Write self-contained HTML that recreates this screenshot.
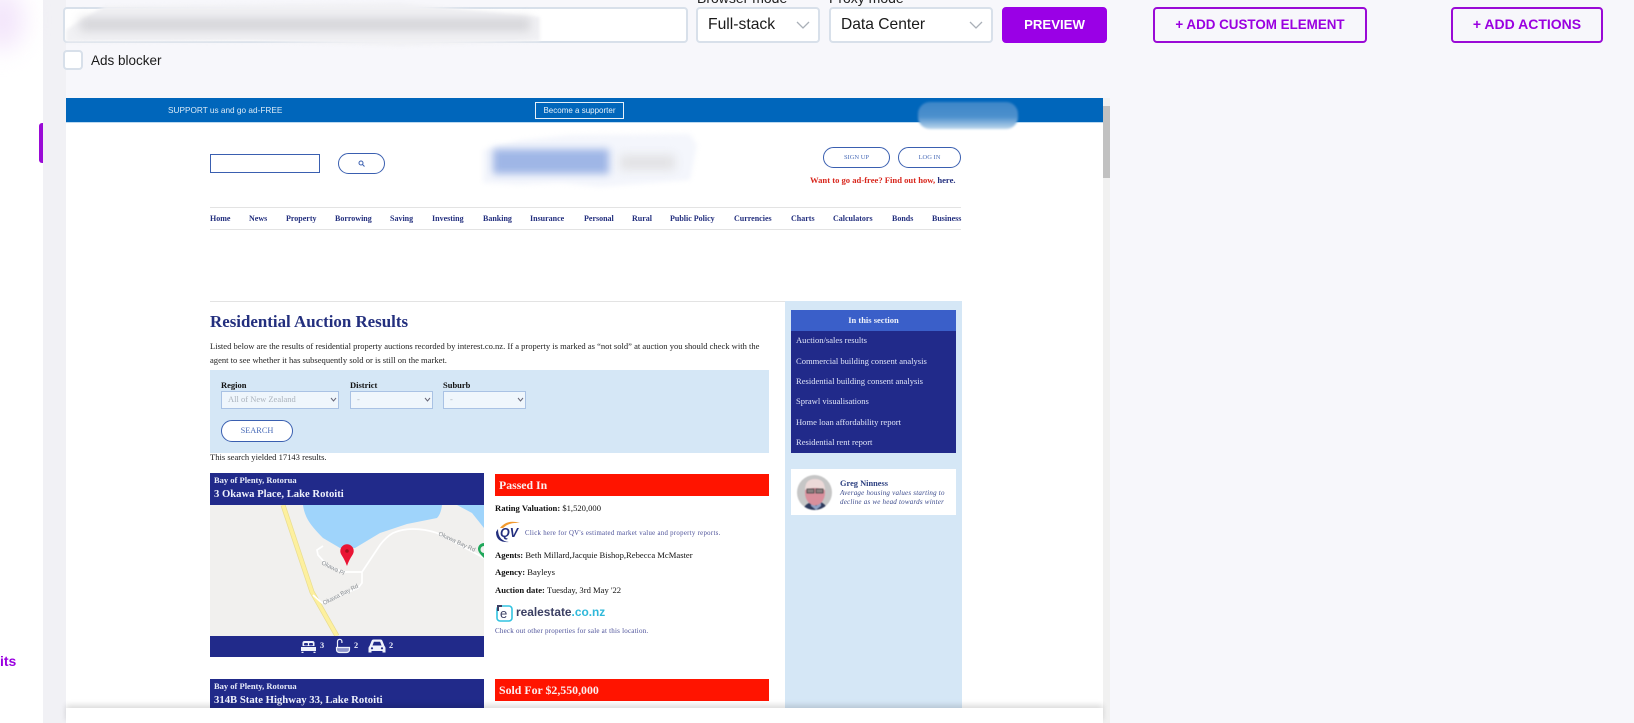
<!DOCTYPE html>
<html><head><meta charset="utf-8"><style>
html,body{margin:0;padding:0;width:1634px;height:723px;overflow:hidden;background:#f7f7fb}
body{position:relative;font-family:"Liberation Sans",sans-serif}
.a{position:absolute;box-sizing:border-box}
.t{position:absolute;white-space:nowrap;line-height:1}
.s{font-family:"Liberation Serif",serif}
.box{position:absolute;box-sizing:border-box;background:#fff;border:2px solid #d8e0ea;border-radius:4px}
.pb{position:absolute;box-sizing:border-box;height:36px;top:7px;border:2px solid #9a0ad6;border-radius:4px;color:#9a00e0;font-weight:bold;font-size:13.4px;text-align:center;line-height:32px;white-space:nowrap}
.nav{position:absolute;top:214px;font:bold 8px "Liberation Serif",serif;color:#232f7e;white-space:nowrap;line-height:9px}
.pill{position:absolute;box-sizing:border-box;background:#fff;border:1px solid #3a5fb0;border-radius:11px;text-align:center;color:#4a6cb8;font-family:"Liberation Serif",serif}
.sel{position:absolute;box-sizing:border-box;top:391px;height:18px;background:#eff6fc;border:1px solid #a9c2e4;font:8.5px/15px "Liberation Serif",serif;color:#aab2bc;padding-left:6px}
.lab{position:absolute;top:381px;font:bold 8.5px "Liberation Serif",serif;color:#111;white-space:nowrap;line-height:9px}
.side{position:absolute;left:796px;font:8.55px "Liberation Serif",serif;color:#dfe4f8;white-space:nowrap;line-height:9px}
.d{position:absolute;font:8.6px "Liberation Serif",serif;color:#111;white-space:nowrap;line-height:10px;left:495px}
.s,.nav,.lab,.side,.d,.sel,.pill{filter:blur(.25px)}
</style></head><body>

<!-- left nav -->
<div class="a" style="left:0;top:0;width:43px;height:723px;background:#fff"></div>
<div class="a" style="left:43px;top:0;width:23px;height:723px;background:#f1f1f5"></div>
<div class="a" style="left:-20px;top:-10px;width:44px;height:60px;background:#f3e6fb;filter:blur(12px);border-radius:50%"></div>
<div class="a" style="left:39px;top:123px;width:4px;height:40px;background:#9a0ad6;border-radius:3px 0 0 3px"></div>
<div class="t" style="left:0;top:654px;font-size:14px;font-weight:bold;color:#9a00e0">its</div>

<!-- top controls -->
<div class="box" style="left:63px;top:7px;width:625px;height:36px"></div>
<svg class="a" style="left:60px;top:0" width="490" height="50"><polygon points="6,42 6,30 15,24 45,6 340,3 480,17 480,41 340,46 190,41" fill="#f1f1f4" style="filter:blur(1.5px)"/><rect x="20" y="18" width="450" height="13" fill="#d4d4d8" style="filter:blur(5px)"/></svg>
<div class="t" style="left:697px;top:-9px;font-size:14px;color:#222">Browser mode</div>
<div class="t" style="left:829px;top:-9px;font-size:14px;color:#222">Proxy mode</div>
<div class="box" style="left:696px;top:7px;width:124px;height:36px"></div>
<div class="t" style="left:708px;top:17px;font-size:15.7px;color:#1a1a1a">Full-stack</div>
<svg class="a" style="left:796px;top:20px" width="14" height="10"><path d="M1 2l6 6 6-6" fill="none" stroke="#aab0b8" stroke-width="1.3"/></svg>
<div class="box" style="left:829px;top:7px;width:164px;height:36px"></div>
<div class="t" style="left:841px;top:17px;font-size:15.6px;color:#1a1a1a">Data Center</div>
<svg class="a" style="left:969px;top:20px" width="14" height="10"><path d="M1 2l6 6 6-6" fill="none" stroke="#aab0b8" stroke-width="1.3"/></svg>
<div class="pb" style="left:1002px;width:105px;background:#9a00e6;color:#fff;border-color:#9a00e6;font-size:13.2px">PREVIEW</div>
<div class="pb" style="left:1153px;width:214px">+ ADD CUSTOM ELEMENT</div>
<div class="pb" style="left:1451px;width:152px;font-size:14px;line-height:31px">+ ADD ACTIONS</div>
<div class="box" style="left:63px;top:50px;width:20px;height:20px"></div>
<div class="t" style="left:91px;top:54px;font-size:13.5px;color:#1a1a1a">Ads blocker</div>

<!-- iframe -->
<div class="a" style="left:66px;top:98px;width:1037px;height:625px;background:#fff"></div>
<div class="a" style="left:1103px;top:98px;width:7px;height:625px;background:#f1f1f1"></div>
<div class="a" style="left:1103px;top:106px;width:7px;height:72px;background:#c1c1c1"></div>

<div class="a" style="left:66px;top:98px;width:1037px;height:25px;background:#0066bb;border-bottom:1px solid #bcd9f0"></div>
<div class="t" style="left:168px;top:107px;font-size:8.25px;color:#dcebf7;filter:blur(.25px)">SUPPORT us and go ad-FREE</div>
<div class="a" style="left:535px;top:102px;width:89px;height:17px;border:1px solid #e6f0f8;color:#e6f0f8;font-size:8px;text-align:center;line-height:16px">Become a supporter</div>
<div class="a" style="left:918px;top:102px;width:100px;height:27px;border-radius:12px;background:linear-gradient(#3d86c8 0%,#4d90cd 55%,#bcd6ec 100%);filter:blur(1px)"></div>

<div class="a" style="left:210px;top:154px;width:110px;height:19px;border:1px solid #3a5fb0;background:#fff"></div>
<div class="pill" style="left:338px;top:153px;width:47px;height:21px"></div>
<svg class="a" style="left:358px;top:160px" width="7" height="7"><circle cx="3" cy="3" r="2" fill="none" stroke="#3a5fb0"/><path d="M4.5 4.5L6.5 6.5" stroke="#3a5fb0"/></svg>
<svg class="a" style="left:475px;top:125px" width="235" height="70"><polygon points="8,25 45,15 95,10 215,9 222,20 215,55 125,62 85,58 45,60 8,58" fill="#f4f6fc" style="filter:blur(2.5px)"/><rect x="18" y="24" width="116" height="25" fill="#9fb6e6" style="filter:blur(4px)"/><rect x="145" y="30" width="55" height="15" fill="#e2e2e4" style="filter:blur(5px)"/></svg>

<div class="pill" style="left:823px;top:147px;width:67px;height:21px;font-size:6.5px;line-height:20px">SIGN UP</div>
<div class="pill" style="left:898px;top:147px;width:63px;height:21px;font-size:6.5px;line-height:20px">LOG IN</div>
<div class="t s" style="left:810px;top:176px;font-size:8.6px;font-weight:bold;color:#d8261c">Want to go ad-free? Find out how, <span style="color:#232f7e">here.</span></div>

<div class="a" style="left:210px;top:207px;width:751px;height:1px;background:#e3e3e3"></div>
<div class="a" style="left:210px;top:229px;width:751px;height:1px;background:#e3e3e3"></div>
<div class="nav" style="left:210px">Home</div>
<div class="nav" style="left:249px">News</div>
<div class="nav" style="left:286px">Property</div>
<div class="nav" style="left:335px">Borrowing</div>
<div class="nav" style="left:390px">Saving</div>
<div class="nav" style="left:432px">Investing</div>
<div class="nav" style="left:483px">Banking</div>
<div class="nav" style="left:530px">Insurance</div>
<div class="nav" style="left:584px">Personal</div>
<div class="nav" style="left:632px">Rural</div>
<div class="nav" style="left:670px">Public Policy</div>
<div class="nav" style="left:734px">Currencies</div>
<div class="nav" style="left:791px">Charts</div>
<div class="nav" style="left:833px">Calculators</div>
<div class="nav" style="left:892px">Bonds</div>
<div class="nav" style="left:932px">Business</div>

<div class="a" style="left:210px;top:301px;width:575px;height:1px;background:#e3e3e3"></div>
<div class="t s" style="left:210px;top:314px;font-size:16.9px;font-weight:bold;color:#232f7e">Residential Auction Results</div>
<div class="t s" style="left:210px;top:342px;font-size:8.55px;color:#222">Listed below are the results of residential property auctions recorded by interest.co.nz. If a property is marked as “not sold” at auction you should check with the</div>
<div class="t s" style="left:210px;top:356px;font-size:8.55px;color:#222">agent to see whether it has subsequently sold or is still on the market.</div>

<div class="a" style="left:210px;top:370px;width:559px;height:83px;background:#d5e7f6"></div>
<div class="lab" style="left:221px">Region</div>
<div class="lab" style="left:350px">District</div>
<div class="lab" style="left:443px">Suburb</div>
<div class="sel" style="left:221px;width:118px">All of New Zealand</div>
<div class="sel" style="left:350px;width:83px">-</div>
<div class="sel" style="left:443px;width:83px">-</div>
<svg class="a" style="left:330px;top:397px" width="7" height="6"><path d="M1 1l2.500 3L6 1" fill="none" stroke="#667"/></svg>
<svg class="a" style="left:424px;top:397px" width="7" height="6"><path d="M1 1l2.500 3L6 1" fill="none" stroke="#667"/></svg>
<svg class="a" style="left:517px;top:397px" width="7" height="6"><path d="M1 1l2.500 3L6 1" fill="none" stroke="#667"/></svg>
<div class="pill" style="left:221px;top:420px;width:72px;height:22px;font-size:8.3px;line-height:20px">SEARCH</div>
<div class="t s" style="left:210px;top:453px;font-size:8.55px;color:#222">This search yielded 17143 results.</div>

<!-- sidebar panel -->
<div class="a" style="left:785px;top:301px;width:177px;height:407px;background:#d5e7f6"></div>
<div class="a" style="left:791px;top:331px;width:165px;height:122px;background:#212a8a"></div>
<div class="a" style="left:791px;top:310px;width:165px;height:21px;background:#3a5fc9"></div>
<div class="t s" style="left:791px;width:165px;text-align:center;top:316px;font-size:8.5px;font-weight:bold;color:#eef2fb">In this section</div>
<div class="side" style="top:336px">Auction/sales results</div>
<div class="side" style="top:357px">Commercial building consent analysis</div>
<div class="side" style="top:377px">Residential building consent analysis</div>
<div class="side" style="top:397px">Sprawl visualisations</div>
<div class="side" style="top:418px">Home loan affordability report</div>
<div class="side" style="top:438px">Residential rent report</div>
<div class="a" style="left:791px;top:469px;width:165px;height:46px;background:#fff"></div>
<svg class="a" style="left:797px;top:475px;filter:blur(.4px)" width="35" height="35" viewBox="0 0 35 35"><defs><clipPath id="c"><circle cx="17.5" cy="17.500" r="17.500"/></clipPath></defs><g clip-path="url(#c)"><rect width="35" height="35" fill="#c6c6c6"/><path d="M6 35q2-7 10-8h7q5 1 8 8z" fill="#2e3a5c"/><path d="M14 27l5 4 5-4v4l-5 4-5-4z" fill="#8ea0c4"/><ellipse cx="18" cy="17.500" rx="10" ry="13" fill="#d98f9c"/><path d="M8 15Q8 4 18 4t10 11q-10-4-20 0z" fill="#ecd9d8"/><path d="M10 14h7v4h-7zM19 14h7v4h-7z" fill="#8a7f80" stroke="#444" stroke-width=".8"/></g></svg>
<div class="t s" style="left:840px;top:480px;font-size:8.4px;font-weight:bold;color:#2c3f80">Greg Ninness</div>
<div class="t s" style="left:840px;top:490px;font-size:7px;font-style:italic;color:#3b4a8c;letter-spacing:.22px">Average housing values starting to</div>
<div class="t s" style="left:840px;top:499px;font-size:7px;font-style:italic;color:#3b4a8c;letter-spacing:.22px">decline as we head towards winter</div>

<!-- card 1 -->
<div class="a" style="left:210px;top:473px;width:274px;height:32px;background:#212a8a"></div>
<div class="t s" style="left:214px;top:476px;font-size:8.5px;font-weight:bold;color:#e8ecfa">Bay of Plenty, Rotorua</div>
<div class="t s" style="left:214px;top:489.500px;font-size:10.65px;font-weight:bold;color:#eef1fb">3 Okawa Place, Lake Rotoiti</div>
<svg class="a" style="left:210px;top:505px;filter:blur(.3px)" width="274" height="131" viewBox="0 0 274 131">
<rect width="274" height="131" fill="#f1f0ee"/>
<path d="M93 0Q94 8 98 15T113 33L130 43H145L170 28 197 19 227 13Q231 9 232 0ZM247 0L262 8 274 23V0Z" fill="#9fd4fb"/>
<path d="M73 0L102 87 127 131" fill="none" stroke="#e8dc90" stroke-width="5"/>
<path d="M73 0L102 87 127 131" fill="none" stroke="#fdf09e" stroke-width="3.600"/>
<path d="M274 53L263 47 227 28Q215 24 203 24 192 24 183 28 176 32 170 40L152 67V78L148 83 112 98 103 90M152 67H133L117 60 108 50 107 45 113 41" fill="none" stroke="#fff" stroke-width="1.700"/>
<path d="M137 61C133.500 51 130.300 50 130.300 46a6.700 6.700 0 0 1 13.400 0C143.700 50 140.500 51 137 61Z" fill="#ea1434"/>
<circle cx="137" cy="46" r="1.800" fill="#a5101c"/>
<path d="M274 38a6 6 0 0 0-6 6c0 3 3 6 6 9v-5a3.500 3.500 0 0 1 0-7z" fill="#1fa75a"/>
<g font-family="Liberation Sans,sans-serif" font-size="6" fill="#888d92">
<text transform="translate(228 30) rotate(25)" textLength="40">Okawa Bay Rd</text>
<text transform="translate(111 59) rotate(27)" textLength="25">Okawa Pl</text>
<text transform="translate(114 100) rotate(-27)" textLength="39">Okawa Bay Rd</text>
</g></svg>
<div class="a" style="left:210px;top:636px;width:274px;height:21px;background:#212a8a"></div>
<svg class="a" style="left:300px;top:638px;filter:blur(.3px)" width="100" height="18" viewBox="0 0 100 18">
<g fill="#eef1fb">
<path d="M2.500 8V5q0-2 2-2h8q2 0 2 2v3z"/>
<rect x="4" y="5" width="4" height="2.500" rx="1" fill="#212a8a"/><rect x="9" y="5" width="4" height="2.500" rx="1" fill="#212a8a"/>
<path d="M1 9h15v4H1zM1.500 13.800h2V15h-2zM13.500 13.800h2V15h-2z"/>
<path d="M69.500 8l2-5q.5-1.500 2-1.500h7q1.500 0 2 1.500l2 5q1 1 1 2v4.500h-3V13h-11v1.500h-3V10q0-1 1-2z"/>
<path d="M72.500 7.500l1.400-3.800h6.200l1.400 3.800z" fill="#212a8a"/>
<circle cx="72" cy="10.300" r="1.100" fill="#212a8a"/><circle cx="82" cy="10.300" r="1.100" fill="#212a8a"/>
</g>
<path d="M37.500 9V3.500a2.200 2.200 0 0 1 4.400 0V5" fill="none" stroke="#eef1fb" stroke-width="1.200"/>
<path d="M36.500 9.500h13v1.800q0 3.200-3.200 3.200h-6.600q-3.200 0-3.200-3.200z" fill="#8f96cc" stroke="#eef1fb" stroke-width="1.200"/>
</svg>
<div class="t s" style="left:320px;top:642px;font-size:8.3px;font-weight:bold;color:#eef1fb">3</div>
<div class="t s" style="left:354px;top:642px;font-size:8.3px;font-weight:bold;color:#eef1fb">2</div>
<div class="t s" style="left:389px;top:642px;font-size:8.3px;font-weight:bold;color:#eef1fb">2</div>

<div class="a" style="left:495px;top:474px;width:274px;height:22px;background:#ff1400"></div>
<div class="t s" style="left:499px;top:480px;font-size:11.8px;font-weight:bold;color:#fbeeee">Passed In</div>
<div class="d" style="top:503px"><b>Rating Valuation:</b> $1,520,000</div>
<svg class="a" style="left:494px;top:520px" width="28" height="24" viewBox="0 0 28 24"><path d="M6 8Q13-1 26 3 15 2 9 8z" fill="#f29a2e"/><path d="M2 12q0 11 13 10Q4 21 4 9z" fill="#232f7e"/><text x="6" y="17" font-family="Liberation Sans,sans-serif" font-size="12.500" font-weight="bold" font-style="italic" fill="#232f7e">QV</text></svg>
<div class="t" style="left:525px;top:530.500px;font-size:6.8px;color:#4b5099;font-family:'Liberation Serif',serif;letter-spacing:.3px;filter:blur(.25px)">Click here for QV's estimated market value and property reports.</div>
<div class="d" style="top:550px"><b>Agents:</b> Beth Millard,Jacquie Bishop,Rebecca McMaster</div>
<div class="d" style="top:567px"><b>Agency:</b> Bayleys</div>
<div class="d" style="top:585px"><b>Auction date:</b> Tuesday, 3rd May '22</div>
<svg class="a" style="left:495px;top:603px" width="20" height="20" viewBox="0 0 20 20"><rect x="2" y="3" width="15" height="15" rx="3" fill="none" stroke="#32c3e0" stroke-width="1.600"/><path d="M3 8V3h4" fill="none" stroke="#3b3f63" stroke-width="2"/><text x="5" y="15" font-family="Liberation Sans,sans-serif" font-size="13" fill="#3b3f63">e</text></svg>
<div class="t" style="left:516px;top:607px;font-size:11.9px;font-weight:bold;color:#3b3f63;filter:blur(.25px)">realestate<span style="color:#2fb8da;font-weight:bold">.co.nz</span></div>
<div class="t s" style="left:495px;top:628px;font-size:7px;color:#4b5099;letter-spacing:.22px">Check out other properties for sale at this location.</div>

<!-- card 2 -->
<div class="a" style="left:210px;top:679px;width:274px;height:29px;background:#212a8a"></div>
<div class="t s" style="left:214px;top:682px;font-size:8.5px;font-weight:bold;color:#e8ecfa">Bay of Plenty, Rotorua</div>
<div class="t s" style="left:214px;top:695px;font-size:10.7px;font-weight:bold;color:#eef1fb">314B State Highway 33, Lake Rotoiti</div>
<div class="a" style="left:495px;top:679px;width:274px;height:22px;background:#ff1400"></div>
<div class="t s" style="left:499px;top:685px;font-size:11.85px;font-weight:bold;color:#fbeeee">Sold For $2,550,000</div>

<!-- bottom sheet -->
<div class="a" style="left:66px;top:708px;width:1037px;height:15px;background:#fff;box-shadow:0 -3px 6px rgba(0,0,0,.14)"></div>
</body></html>
